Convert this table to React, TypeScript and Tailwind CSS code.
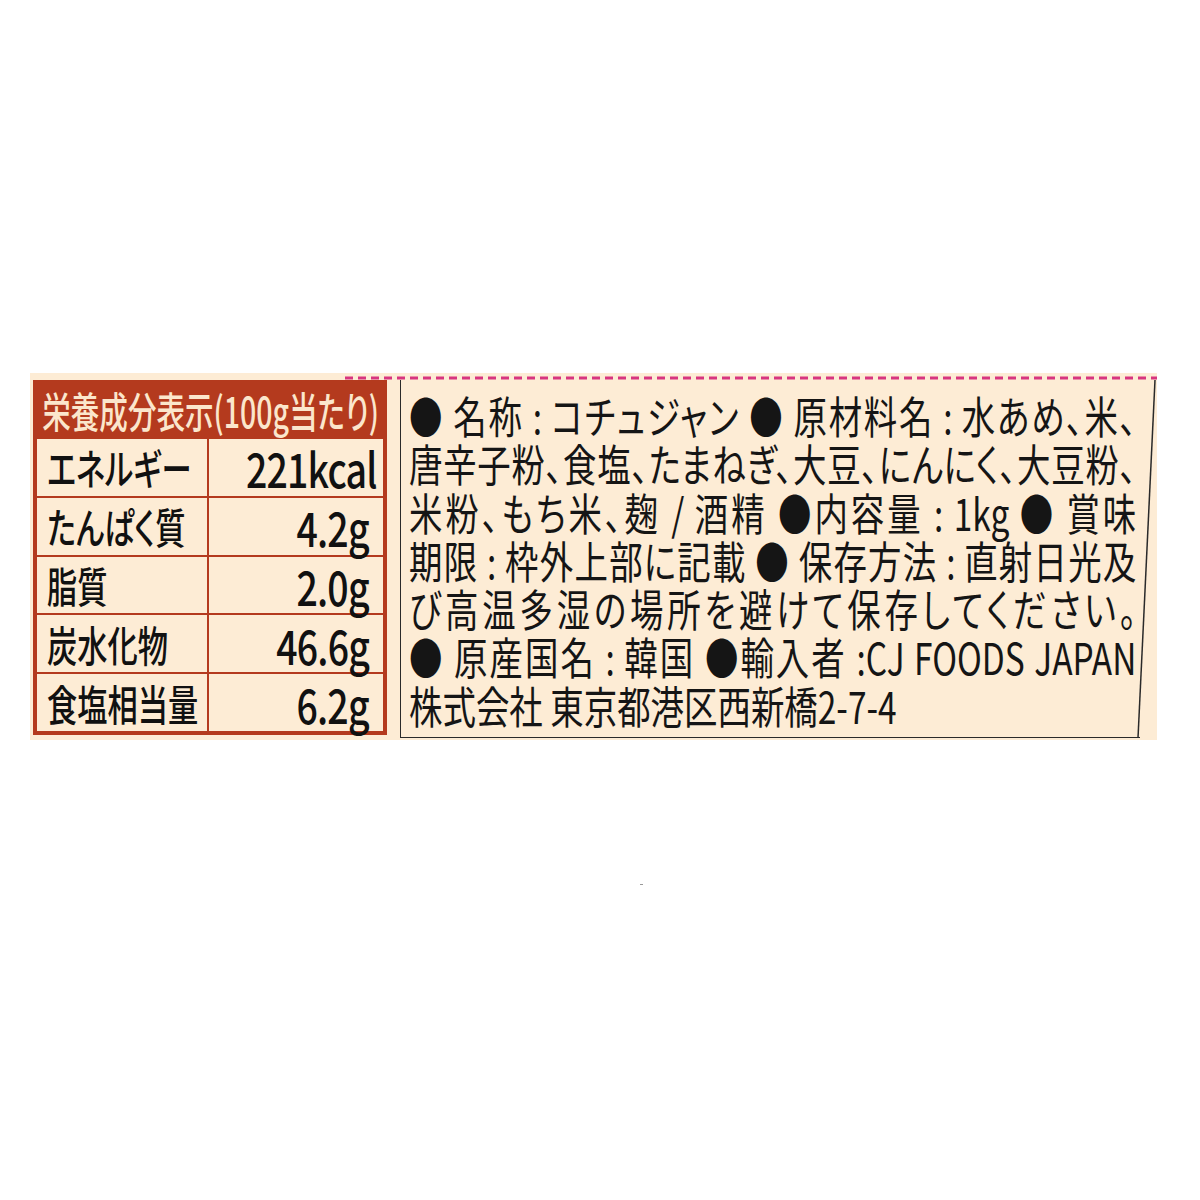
import React from "react";

const FONT = "font-['Noto_Sans_CJK_JP','Noto_Sans',sans-serif]";

const rows: [string, string][] = [
  ["エネルギー", "221kcal"],
  ["たんぱく質", "4.2g"],
  ["脂質", "2.0g"],
  ["炭水化物", "46.6g"],
  ["食塩相当量", "6.2g"],
];

const lines = [
  "● 名称 : コチュジャン ● 原材料名 : 水あめ、米、",
  "唐辛子粉、食塩、たまねぎ、大豆、にんにく、大豆粉、",
  "米粉、もち米、麹 / 酒精 ●内容量 : 1kg ● 賞味",
  "期限 : 枠外上部に記載 ● 保存方法 : 直射日光及",
  "び高温多湿の場所を避けて保存してください。",
  "● 原産国名 : 韓国 ●輸入者 :CJ FOODS JAPAN",
];

export default function App() {
  return (
    <div className={`w-[1200px] h-[1200px] bg-white overflow-hidden ${FONT} [font-feature-settings:'palt']`}>
      <div className="ml-[30px] mt-[373px] w-[1127px] h-[367px] bg-[#fdecd5] relative flex pt-[7px] pl-[3px]">
        {/* Nutrition table */}
        <div className="w-[354px] h-[355px] border-[4px] border-[#b43a1e] flex flex-col">
          <div className="h-[55px] bg-[#b43a1e] flex items-center justify-center pb-[4px]">
            <span className="whitespace-nowrap text-[42px] leading-none font-medium text-[#fbe6cc] scale-x-[0.68] origin-center">
              栄養成分表示(100g当たり)
            </span>
          </div>
          {rows.map(([k, v], i) => (
            <div
              key={k}
              className={`flex flex-1 ${i === 0 ? "" : "border-t-2 border-[#b43a1e]"}`}
            >
              <div className="w-[172px] border-r-2 border-[#b43a1e] flex items-center pl-[10px]">
                <span className="whitespace-nowrap text-[42px] leading-none font-medium text-[#111] scale-x-[0.72] origin-left">
                  {k}
                </span>
              </div>
              <div className="flex-1 flex items-center justify-end pr-[14px]">
                <span className="whitespace-nowrap text-[48px] leading-none font-medium text-[#111] scale-x-[0.78] origin-right tracking-[-1px]">
                  {v}
                </span>
              </div>
            </div>
          ))}
        </div>

        {/* Right info box */}
        <div className="ml-[13px] w-[740px] h-[358px] border-l-[1.5px] border-b-[1.5px] border-[#2a2a2a] pl-[8px] pt-[11px]">
          <div className="scale-x-[0.76] origin-left text-[44px] leading-[48.3px] text-[#151515] font-normal">
            {lines.map((l) => (
              <div key={l} className="w-[957px] whitespace-nowrap [text-align-last:justify]">
                {l}
              </div>
            ))}
            <div className="whitespace-nowrap">株式会社 東京都港区西新橋2-7-4</div>
          </div>
        </div>

        {/* drawn overlays: dashed top edge and slanted right edge */}
        <svg
          className="absolute left-0 top-0 pointer-events-none"
          width="1127"
          height="367"
          viewBox="0 0 1127 367"
        >
          <line x1="315" y1="5" x2="1127" y2="5" stroke="#d8357f" strokeWidth="3" strokeDasharray="8 5" />
          <line x1="1125" y1="7" x2="1108" y2="365" stroke="#2a2a2a" strokeWidth="1.5" />
        </svg>
      </div>
      <div className="ml-[640px] mt-[144px] w-[3px] h-[1px] bg-[#999]" />
    </div>
  );
}
